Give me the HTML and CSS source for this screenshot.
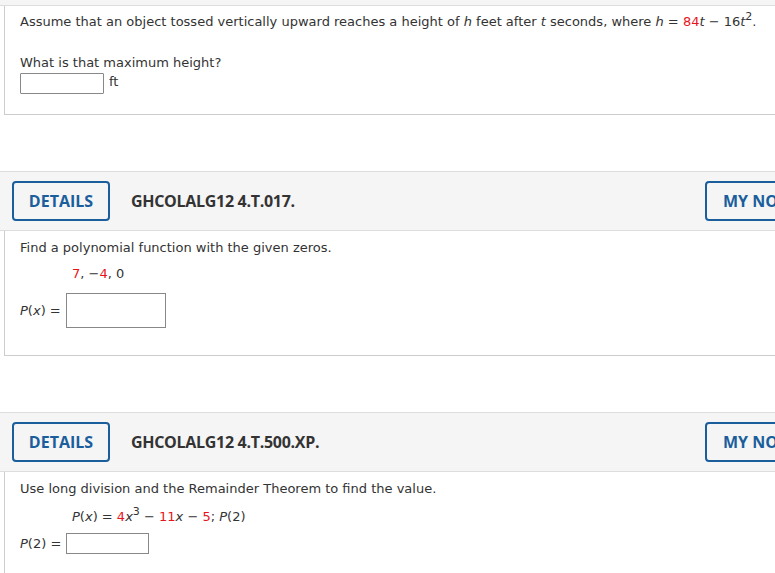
FILE: index.html
```html
<!DOCTYPE html>
<html lang="en">
<head>
    <meta charset="UTF-8">
    <title>Assignment</title>
    <link rel="stylesheet" href="styles.css">
</head>
<body>
    <div class="top-strip"></div>

    <div class="question-body q1">
        <p class="line">Assume that an object tossed vertically upward reaches a height of <i>h</i> feet after <i>t</i> seconds, where <i>h</i> = <span class="red">84</span><i>t</i> &minus; 16<i>t</i><sup>2</sup>.</p>
        <p class="line ask">What is that maximum height?</p>
        <div class="answer-row top">
            <span class="input small-a"></span>
            <span class="unit">ft</span>
        </div>
    </div>

    <div class="question-header">
        <button class="btn">DETAILS</button>
        <span class="q-id">GHCOLALG12 4.T.017.</span>
        <button class="btn btn-notes">MY NOTES</button>
    </div>
    <div class="question-body q2">
        <p class="line">Find a polynomial function with the given zeros.</p>
        <p class="line indent"><span class="red">7</span>, &minus;<span class="red">4</span>, 0</p>
        <div class="answer-row">
            <span class="label"><i>P</i>(<i>x</i>) =</span>
            <span class="input big"></span>
        </div>
    </div>

    <div class="question-header">
        <button class="btn">DETAILS</button>
        <span class="q-id">GHCOLALG12 4.T.500.XP.</span>
        <button class="btn btn-notes">MY NOTES</button>
    </div>
    <div class="question-body q3">
        <p class="line">Use long division and the Remainder Theorem to find the value.</p>
        <p class="line indent"><i>P</i>(<i>x</i>) = <span class="red">4</span><i>x</i><sup>3</sup> &minus; <span class="red">11</span><i>x</i> &minus; <span class="red">5</span>; <i>P</i>(2)</p>
        <div class="answer-row">
            <span class="label"><i>P</i>(2) =</span>
            <span class="input small-b"></span>
        </div>
    </div>
</body>
</html>
```

FILE: styles.css
```css
body {
    margin: 0;
    background: #fff;
    font-family: "DejaVu Sans", Verdana, sans-serif;
    font-size: 13px;
    color: #333;
    width: 775px;
    overflow: hidden;
}

.top-strip {
    height: 5px;
    background: #f5f5f5;
    border-bottom: 1px solid #ddd;
}

.question-body {
    margin-left: 4px;
    border-left: 1px solid #ccc;
    border-bottom: 1px solid #ccc;
    padding: 8px 0 20px 15px;
}

.line {
    margin: 0;
    line-height: 16px;
    white-space: nowrap;
}

.line sup {
    font-size: 11px;
    line-height: 0;
    vertical-align: 6px;
}

.red {
    color: #e8141b;
}

.indent {
    padding-left: 52px;
}

.ask {
    margin-top: 25px;
}

.answer-row {
    display: flex;
    align-items: center;
    gap: 5px;
}

.answer-row.top {
    align-items: flex-start;
    margin-top: 2px;
}

.input {
    display: inline-block;
    border: 1px solid #888;
    background: #fff;
    box-sizing: border-box;
}

.small-a {
    width: 84px;
    height: 21px;
    border-radius: 1px;
}

.unit {
    line-height: 18px;
}

.label {
    line-height: 16px;
}

.big {
    width: 100px;
    height: 35px;
}

.small-b {
    width: 83px;
    height: 21px;
}

.q1 {
    padding-bottom: 20px;
}

.q2 {
    padding-top: 9px;
    padding-bottom: 27px;
}

.q2 .indent {
    margin-top: 10px;
}

.q2 .answer-row {
    margin-top: 11px;
}

.q3 {
    padding-top: 9px;
    padding-bottom: 20px;
}

.q3 .indent {
    margin-top: 12px;
}

.q3 .answer-row {
    margin-top: 8px;
}

.question-header {
    margin-top: 56px;
    background: #f5f5f5;
    border-top: 1px solid #ddd;
    border-bottom: 1px solid #ddd;
    height: 58px;
    display: flex;
    align-items: center;
    padding-left: 12px;
    white-space: nowrap;
}

.btn {
    font-family: "Open Sans", sans-serif;
    font-weight: 700;
    font-size: 16px;
    color: #1a5e9c;
    background: #f5f5f5;
    border: 2px solid #1a5e9c;
    border-radius: 4px;
    height: 40px;
    width: 98px;
    padding: 0;
    flex-shrink: 0;
}

.btn-notes {
    width: 120px;
    margin-left: auto;
    margin-right: -50px;
    text-align: left;
    padding-left: 16px;
}

.q-id {
    font-family: "Open Sans", sans-serif;
    font-weight: 700;
    font-size: 16px;
    color: #333;
    margin-left: 21px;
    letter-spacing: -0.3px;
}
```
